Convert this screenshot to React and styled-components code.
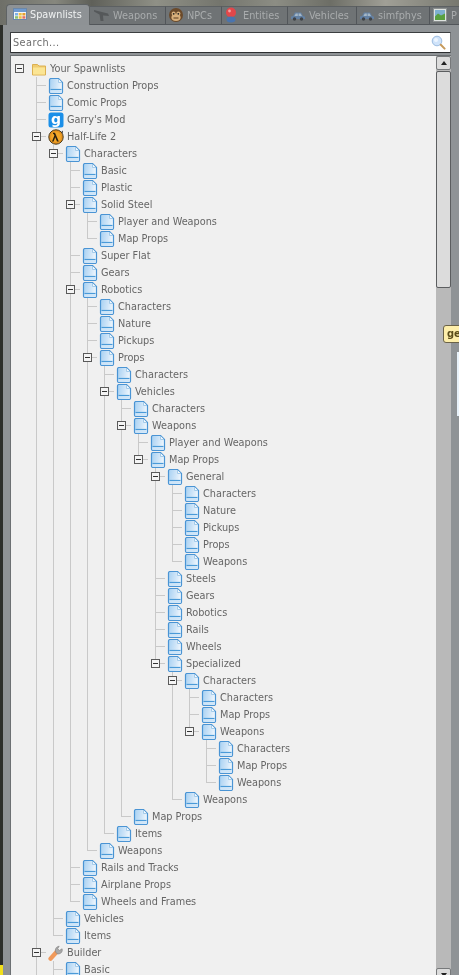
import React from 'react';
import styled, { createGlobalStyle } from 'styled-components';

const Global = createGlobalStyle`
  html, body { margin: 0; padding: 0; background: #2d2f2b; }
  * { box-sizing: border-box; }
`;

const FONT = `"DejaVu Sans Condensed", "DejaVu Sans", "Liberation Sans", sans-serif`;

const Page = styled.div`
  position: relative;
  width: 459px;
  height: 975px;
  overflow: hidden;
  display: flex;
  flex-direction: column;
  font: 10.8px ${FONT};
  filter: blur(0.3px);
  background:
    linear-gradient(90deg, #6e6f68 0, #86877e 12%, #5f6059 20%, #8f9086 34%, #74756d 48%, #8c8d84 60%, #6d6e66 72%, #a09f96 84%, #77786f 100%);
`;
const TabStrip = styled.div`
  display: flex;
  align-items: flex-end;
  height: 25px;
  padding-left: 6px;
  flex: none;
`;
const Tab = styled.div`
  flex: none;
  width: ${p => p.$w}px;
  height: ${p => (p.$active ? 21 : 19)}px;
  display: flex;
  align-items: center;
  gap: ${p => (p.$active ? 2 : 3)}px;
  padding: ${p => (p.$active ? '0 0 2px 5px' : `0 0 1px ${p.$pad}px`)};
  color: ${p => (p.$active ? '#f0f2f2' : '#a9acad')};
  background: ${p => (p.$active ? '#8e9295' : '#6f7375')};
  border-right: 1px solid #52565a;
  border-radius: ${p => (p.$active ? '4px 4px 0 0' : '0')};
  position: relative;
  white-space: nowrap;
  overflow: hidden;
  ${p => (p.$active ? 'border: 1px solid #5f6365; border-bottom: 0;' : 'border-top: 1px solid #5c6062; border-bottom: 1px solid #52565a;')}
`;
const TabIcon = styled.svg`
  flex: none;
  width: 16px;
  height: 16px;
  opacity: ${p => (p.$dim ? 0.75 : 1)};
`;
const Body = styled.div`
  flex: 1;
  min-height: 0;
  display: flex;
  background: #2d2f2b;
  padding-left: 3px;
`;
const Panel = styled.div`
  flex: 1;
  min-width: 0;
  display: flex;
  flex-direction: column;
  gap: 2px;
  padding: 7px 8px 0 7px;
  background: #8f9396;
`;
const SearchBar = styled.div`
  flex: none;
  height: 21px;
  display: flex;
  align-items: center;
  justify-content: space-between;
  padding: 0 4px 0 2px;
  background: #fff;
  border: 1px solid #3c3e40;
  border-right-color: #75787a;
  border-bottom-color: #2c2e30;
  border-radius: 1px;
  color: #6e6e6e;
  letter-spacing: 0.45px;
`;
const TreeFrame = styled.div`
  flex: 1;
  min-height: 0;
  display: flex;
  border: 1px solid #6c7073;
  border-bottom: 0;
  border-right: 0;
  background: #f0f0f0;
  overflow: hidden;
`;
const TreeArea = styled.div`
  flex: 1;
  min-width: 0;
  padding-top: 4px;
  overflow: hidden;
  color: #666;
`;
const List = styled.ul`
  list-style: none;
  margin: 0 0 0 ${p => (p.$root ? 0 : 17)}px;
  padding: 0;
`;
const Node = styled.li`
  position: relative;
  ${p => !p.$root && `
    &::before {
      content: '';
      position: absolute;
      left: 8px;
      top: 0;
      width: 1px;
      height: ${p.$last ? '9px' : '100%'};
      background: #c9c9c9;
    }
  `}
`;
const Row = styled.div`
  position: relative;
  height: 17px;
  display: flex;
  align-items: center;
  white-space: nowrap;
  &::before {
    content: '';
    display: ${p => (p.$root ? 'none' : 'block')};
    position: absolute;
    left: 8px;
    top: 8px;
    width: 10px;
    height: 1px;
    background: #c9c9c9;
  }
`;
const Slot = styled.span`
  position: relative;
  flex: none;
  width: 17px;
  height: 17px;
  display: flex;
  align-items: center;
  justify-content: center;
`;
const Expander = styled.span`
  position: relative;
  width: 9px;
  height: 9px;
  background: #f4f4f4;
  border: 1px solid #5a5a5a;
  &::after {
    content: '';
    position: absolute;
    left: 1px;
    top: 3px;
    width: 5px;
    height: 1px;
    background: #333;
  }
`;
const NodeIcon = styled.svg`
  position: relative;
  flex: none;
  width: 16px;
  height: 16px;
  margin: 0 3px;
`;
const Label = styled.span`
  line-height: 17px;
`;
const Scrollbar = styled.div`
  flex: none;
  width: 15px;
  margin-bottom: -8px;
  display: flex;
  flex-direction: column;
  background: #b9b9b9;
  overflow: hidden;
`;
const ScrollBtn = styled.div`
  flex: none;
  height: 14px;
  margin: 0 0 1px;
  background: #dcdcdc;
  border: 1px solid #77797b;
  border-radius: 2px;
  display: flex;
  align-items: center;
  justify-content: center;
  &::after {
    content: '';
    width: 0;
    height: 0;
    border-left: 3.5px solid transparent;
    border-right: 3.5px solid transparent;
    ${p => (p.$down ? 'border-top: 4px solid #222;' : 'border-bottom: 4px solid #222;')}
  }
`;
const Thumb = styled.div`
  flex: none;
  height: 217px;
  background: #dcdcdc;
  border: 1px solid #5c5e60;
  border-radius: 2px;
`;
const Track = styled.div`
  flex: 1;
`;
const Tooltip = styled.div`
  position: absolute;
  left: 443px;
  top: 325px;
  width: 24px;
  height: 18px;
  padding-left: 3px;
  background: #fdeeaa;
  border: 1px solid #6a6248;
  border-radius: 3px;
  color: #5a4c1a;
  font: bold 11px/15px ${FONT};
`;
const EdgeWindow = styled.div`
  position: absolute;
  left: 457px;
  top: 352px;
  width: 2px;
  height: 64px;
  background: #e8f2fa;
`;
const EdgeMark = styled.div`
  position: absolute;
  left: 0;
  top: 965px;
  width: 3px;
  height: 10px;
  background: #f2e01c;
`;

const Doc = () => (
  <NodeIcon viewBox="0 0 16 16">
    <defs>
      <linearGradient id="docFill" x1="0" y1="0" x2="1" y2="0.2">
        <stop offset="0" stopColor="#a6d0f2" />
        <stop offset="0.6" stopColor="#cfe5f8" />
        <stop offset="1" stopColor="#eef6fd" />
      </linearGradient>
    </defs>
    <path d="M1.5 2a1.5 1.5 0 0 1 1.5-1.5H10.5L14.5 4.5V14a1.5 1.5 0 0 1-1.5 1.5H3A1.5 1.5 0 0 1 1.5 14Z" fill="url(#docFill)" stroke="#4a94d4" strokeWidth="1.2" />
    <path d="M10.5 1V4.5H14" fill="#f2f8fd" stroke="#9cc6e8" strokeWidth=".9" />
    <path d="M2.5 11.5H13.5" stroke="#4a9ad8" strokeWidth="1.2" />
    <path d="M2.3 12.3H13.7V14.7H2.3Z" fill="#cfe5f8" />
  </NodeIcon>
);
const Folder = () => (
  <NodeIcon viewBox="0 0 16 16">
    <path d="M1.5 3.5h5l1.5 1.5h6.5v9h-13Z" fill="#f0cc70" stroke="#dcb050" />
    <path d="M2 6.5h12V13.5H2Z" fill="#fbe594" />
  </NodeIcon>
);
const GarrysMod = () => (
  <NodeIcon viewBox="0 0 16 16">
    <rect x="0.5" y="0.5" width="15" height="15" rx="2.5" fill="#1b8fe8" />
    <text x="8" y="12" textAnchor="middle" fontFamily="'DejaVu Sans', sans-serif" fontWeight="bold" fontSize="14" fill="#fff">g</text>
  </NodeIcon>
);
const HalfLife = () => (
  <NodeIcon viewBox="0 0 16 16">
    <circle cx="8" cy="8" r="7.2" fill="#e8951f" stroke="#4b3a1c" />
    <circle cx="8" cy="8" r="5" fill="#f3a728" />
    <path d="M5 3.8h2l3.8 8.6H9L7.2 8.2 5.6 12.4H4L6.4 6.5 5.6 5H5Z" fill="#2c210f" />
    <path d="M13.5 2.5 15 1.5 15 5Z" fill="#555" />
  </NodeIcon>
);
const Wrench = () => (
  <NodeIcon viewBox="0 0 16 16">
    <path d="M2.6 13.6 9 6.5" stroke="#f0995a" strokeWidth="4.4" strokeLinecap="round" />
    <path d="M8 7.5a4 4 0 0 1 2-6l1.2-.3-1.6 2.6 1.8 1.6 2.7-1.6.2 1.4a4 4 0 0 1-5.2 3.6Z" fill="#a9a9a9" stroke="#7c7c7c" strokeWidth=".6" />
  </NodeIcon>
);
const ICONS = { doc: Doc, folder: Folder, g: GarrysMod, hl: HalfLife, wrench: Wrench };

const SpawnIcon = () => (
  <TabIcon viewBox="0 0 16 16">
    <rect x="1.5" y="2.5" width="13" height="11" fill="#f4f6f8" stroke="#6b87a8" />
    <rect x="2" y="3" width="12" height="3" fill="#6f9ad0" />
    <rect x="3" y="7" width="3" height="2.5" fill="#7db0e8" /><rect x="6.7" y="7" width="3" height="2.5" fill="#f0c040" /><rect x="10.4" y="7" width="3" height="2.5" fill="#e8a030" />
    <rect x="3" y="10.2" width="3" height="2.5" fill="#8cc070" /><rect x="6.7" y="10.2" width="3" height="2.5" fill="#f0c040" /><rect x="10.4" y="10.2" width="3" height="2.5" fill="#e87060" />
  </TabIcon>
);
const GunIcon = () => (
  <TabIcon viewBox="0 0 16 16" $dim>
    <path d="M0 3 14 6.5 15 9 9 8.5 9.5 14H6.5L5.5 7.5 0 4.5Z" fill="#4d5052" />
  </TabIcon>
);
const MonkeyIcon = () => (
  <TabIcon viewBox="0 0 16 16">
    <circle cx="8" cy="8" r="7" fill="#6b4a2a" />
    <ellipse cx="8" cy="10.5" rx="4.6" ry="3.4" fill="#d8b07c" />
    <ellipse cx="5.6" cy="6.6" rx="2" ry="2.2" fill="#d8b07c" /><ellipse cx="10.4" cy="6.6" rx="2" ry="2.2" fill="#d8b07c" />
    <circle cx="5.7" cy="6.8" r=".9" fill="#222" /><circle cx="10.3" cy="6.8" r=".9" fill="#222" />
    <path d="M5.5 11h5" stroke="#5a3a1c" />
  </TabIcon>
);
const EntityIcon = () => (
  <TabIcon viewBox="0 0 16 16">
    <circle cx="7" cy="5.5" r="5" fill="#e2474a" />
    <circle cx="5.5" cy="4" r="1.4" fill="#f5a3a3" />
    <ellipse cx="7" cy="12.5" rx="4.5" ry="3" fill="#4a74ae" />
  </TabIcon>
);
const CarIcon = () => (
  <TabIcon viewBox="0 0 16 16" $dim>
    <path d="M1 9.5 3 9l2-3.5h6L13 9l2 .8V12H1Z" fill="#5f86b4" />
    <path d="M5.8 6.5h2v2.4H4.4ZM8.6 6.5h2l1.4 2.4H8.6Z" fill="#b8cee2" />
    <circle cx="4.5" cy="12" r="1.7" fill="#30343a" /><circle cx="11.5" cy="12" r="1.7" fill="#30343a" />
  </TabIcon>
);
const PictureIcon = () => (
  <TabIcon viewBox="0 0 16 16">
    <rect x="1.5" y="1.5" width="13" height="13" fill="#dfe3e0" stroke="#8c9090" />
    <rect x="3" y="3" width="10" height="10" fill="#7fb0d0" />
    <path d="M3 13V9.5l3-3 3 2 4-2V13Z" fill="#59a040" />
  </TabIcon>
);
const SearchIcon = () => (
  <svg width="15" height="15" viewBox="0 0 15 15">
    <circle cx="6" cy="6" r="4.8" fill="#cfe3fa" stroke="#9dbce0" />
    <circle cx="5" cy="5" r="2" fill="#eef6ff" />
    <path d="M9.8 9.8 13.6 13.6" stroke="#c69a5c" strokeWidth="2" strokeLinecap="round" />
  </svg>
);

const TABS = [
  { label: 'Spawnlists', w: 84, icon: SpawnIcon, active: true },
  { label: 'Weapons', w: 76, icon: GunIcon, pad: 4 },
  { label: 'NPCs', w: 56, icon: MonkeyIcon, pad: 2 },
  { label: 'Entities', w: 66, icon: EntityIcon, pad: 2 },
  { label: 'Vehicles', w: 69, icon: CarIcon, pad: 2 },
  { label: 'simfphys', w: 73, icon: CarIcon, pad: 2 },
  { label: 'P', w: 40, icon: PictureIcon, pad: 2 },
];

const n = (label, kids, extra) => ({ label, kids, ...extra });
const leaves = (...names) => names.map(x => n(x));

const TREE = [
  n('Your Spawnlists', [
    n('Construction Props'),
    n('Comic Props'),
    n("Garry's Mod", null, { icon: 'g' }),
    n('Half-Life 2', [
      n('Characters', [
        n('Basic'),
        n('Plastic'),
        n('Solid Steel', leaves('Player and Weapons', 'Map Props')),
        n('Super Flat'),
        n('Gears'),
        n('Robotics', [
          n('Characters'),
          n('Nature'),
          n('Pickups'),
          n('Props', [
            n('Characters'),
            n('Vehicles', [
              n('Characters'),
              n('Weapons', [
                n('Player and Weapons'),
                n('Map Props', [
                  n('General', leaves('Characters', 'Nature', 'Pickups', 'Props', 'Weapons')),
                  n('Steels'),
                  n('Gears'),
                  n('Robotics'),
                  n('Rails'),
                  n('Wheels'),
                  n('Specialized', [
                    n('Characters', [
                      n('Characters'),
                      n('Map Props'),
                      n('Weapons', leaves('Characters', 'Map Props', 'Weapons')),
                    ]),
                    n('Weapons'),
                  ]),
                ]),
              ]),
              n('Map Props'),
            ]),
            n('Items'),
          ]),
          n('Weapons'),
        ]),
        n('Rails and Tracks'),
        n('Airplane Props'),
        n('Wheels and Frames'),
      ]),
      n('Vehicles'),
      n('Items'),
    ], { icon: 'hl' }),
    n('Builder', [n('Basic', null, { more: true })], { icon: 'wrench', more: true }),
  ], { icon: 'folder' }),
];

function TreeNode({ node, root, last }) {
  const Icon = ICONS[node.icon || 'doc'];
  return (
    <Node $root={root} $last={last && !node.more}>
      <Row $root={root}>
        <Slot>{node.kids && <Expander />}</Slot>
        <Icon />
        <Label>{node.label}</Label>
      </Row>
      {node.kids && (
        <List>
          {node.kids.map((k, i) => (
            <TreeNode key={i} node={k} last={i === node.kids.length - 1} />
          ))}
        </List>
      )}
    </Node>
  );
}

export default function App() {
  return (
    <Page>
      <Global />
      <TabStrip>
        {TABS.map(t => (
          <Tab key={t.label} $w={t.w} $active={t.active} $pad={t.pad}>
            <t.icon />
            <span>{t.label}</span>
          </Tab>
        ))}
      </TabStrip>
      <Body>
        <Panel>
          <SearchBar>
            <span>Search...</span>
            <SearchIcon />
          </SearchBar>
          <TreeFrame>
            <TreeArea>
              <List $root>
                {TREE.map((k, i) => <TreeNode key={i} node={k} root />)}
              </List>
            </TreeArea>
            <Scrollbar>
              <ScrollBtn />
              <Thumb />
              <Track />
              <ScrollBtn $down />
            </Scrollbar>
          </TreeFrame>
        </Panel>
      </Body>
      <Tooltip>ge</Tooltip>
      <EdgeWindow />
      <EdgeMark />
    </Page>
  );
}
